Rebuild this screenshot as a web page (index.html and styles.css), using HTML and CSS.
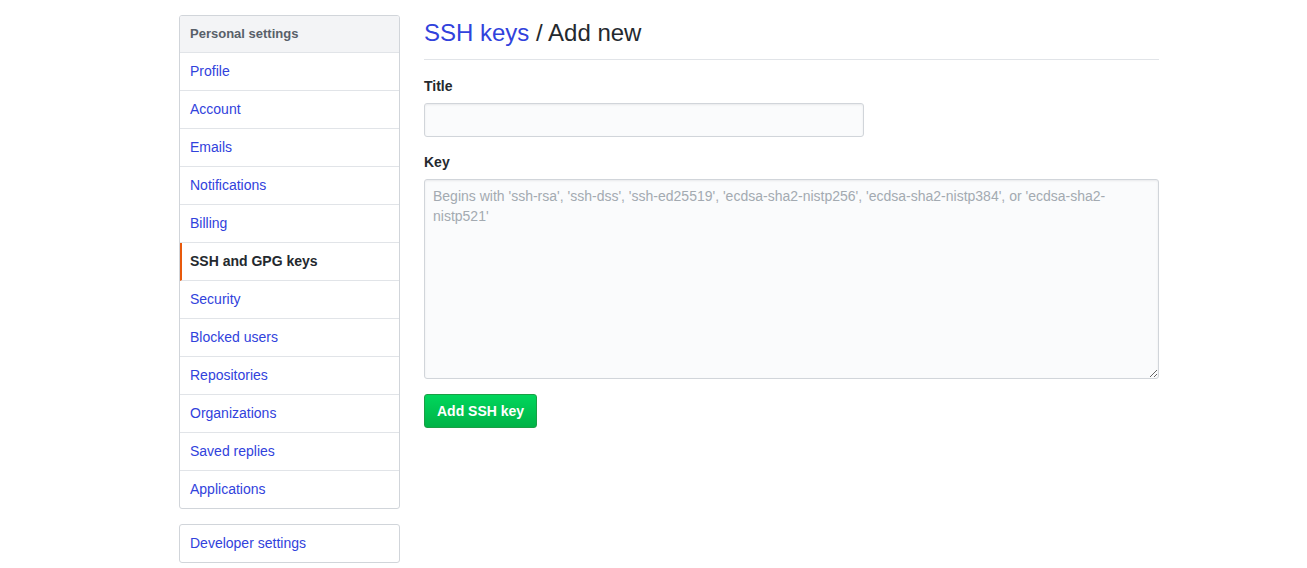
FILE: index.html
```html
<!DOCTYPE html>
<html lang="en">
<head>
<meta charset="utf-8">
<title>SSH keys / Add new</title>
<link rel="stylesheet" href="styles.css">
</head>
<body>
<div class="container">
  <aside class="sidebar">
    <nav class="menu">
      <div class="menu-heading">Personal settings</div>
      <a class="menu-item" href="#">Profile</a>
      <a class="menu-item" href="#">Account</a>
      <a class="menu-item" href="#">Emails</a>
      <a class="menu-item" href="#">Notifications</a>
      <a class="menu-item" href="#">Billing</a>
      <a class="menu-item selected" href="#">SSH and GPG keys</a>
      <a class="menu-item" href="#">Security</a>
      <a class="menu-item" href="#">Blocked users</a>
      <a class="menu-item" href="#">Repositories</a>
      <a class="menu-item" href="#">Organizations</a>
      <a class="menu-item" href="#">Saved replies</a>
      <a class="menu-item" href="#">Applications</a>
    </nav>
    <nav class="menu">
      <a class="menu-item" href="#">Developer settings</a>
    </nav>
  </aside>
  <main class="main">
    <h2 class="subhead"><a href="#">SSH keys</a> / Add new</h2>
    <form class="form">
      <label class="label" for="title">Title</label>
      <input class="input" id="title" type="text">
      <label class="label label-key" for="key">Key</label>
      <textarea class="textarea" id="key" placeholder="Begins with 'ssh-rsa', 'ssh-dss', 'ssh-ed25519', 'ecdsa-sha2-nistp256', 'ecdsa-sha2-nistp384', or 'ecdsa-sha2-nistp521'"></textarea>
      <div><button class="btn" type="button">Add SSH key</button></div>
    </form>
  </main>
</div>
</body>
</html>
```

FILE: styles.css
```css
* { box-sizing: border-box; }
html, body {
  margin: 0;
  background: #fff;
  font-family: "Liberation Sans", Arial, Helvetica, sans-serif;
  font-size: 14px;
  line-height: 1.5;
  color: #24292e;
}
.container {
  display: flex;
  gap: 24px;
  padding: 15px 0 0 179px;
  width: 1159px;
}
.sidebar {
  width: 221px;
  flex: none;
  display: flex;
  flex-direction: column;
  gap: 15px;
}
.menu {
  border: 1px solid #d1d5da;
  border-radius: 3px;
  background: #fff;
  overflow: hidden;
}
.menu-heading {
  background: #f3f4f6;
  color: #586069;
  font-size: 13px;
  font-weight: bold;
  line-height: 20px;
  padding: 8px 10px 8px;
  height: 37px;
  border-bottom: 1px solid #e1e4e8;
}
.menu-item {
  display: block;
  padding: 8px 10px;
  line-height: 21px;
  height: 38px;
  color: #3142dc;
  text-decoration: none;
  border-bottom: 1px solid #e1e4e8;
}
.menu-item:last-child {
  border-bottom: 0;
  height: 37px;
}
.menu-item.selected {
  font-weight: bold;
  color: #24292e;
  border-left: 2px solid #e8590c;
  padding-left: 8px;
}
.main {
  width: 735px;
  flex: none;
}
.subhead {
  margin: 0;
  font-size: 24px;
  font-weight: normal;
  line-height: 36px;
  padding-bottom: 8px;
  border-bottom: 1px solid #e1e4e8;
}
.subhead a {
  color: #3142dc;
  text-decoration: none;
}
.form {
  display: flex;
  flex-direction: column;
}
.label {
  display: block;
  font-weight: bold;
  line-height: 21px;
  margin: 16px 0 6px;
}
.label-key { margin-top: 15px; }
.input, .textarea {
  display: block;
  background: #fafbfc;
  border: 1px solid #d1d5da;
  border-radius: 3px;
  box-shadow: inset 0 1px 2px rgba(27, 31, 35, 0.075);
  font-family: "Liberation Sans", Arial, Helvetica, sans-serif;
  font-size: 14px;
  color: #24292e;
}
.input {
  width: 440px;
  height: 34px;
  padding: 6px 8px;
}
.textarea {
  width: 735px;
  height: 200px;
  padding: 6px 8px;
  line-height: 20px;
  resize: vertical;
}
.textarea::placeholder { color: #a3aab1; }
.btn {
  margin-top: 15px;
  height: 34px;
  padding: 6px 12px;
  font-family: "Liberation Sans", Arial, Helvetica, sans-serif;
  font-size: 14px;
  font-weight: bold;
  line-height: 20px;
  color: #fff;
  background: linear-gradient(#00d65c, #00b347);
  border: 1px solid #1a9f45;
  border-radius: 3px;
}
```
